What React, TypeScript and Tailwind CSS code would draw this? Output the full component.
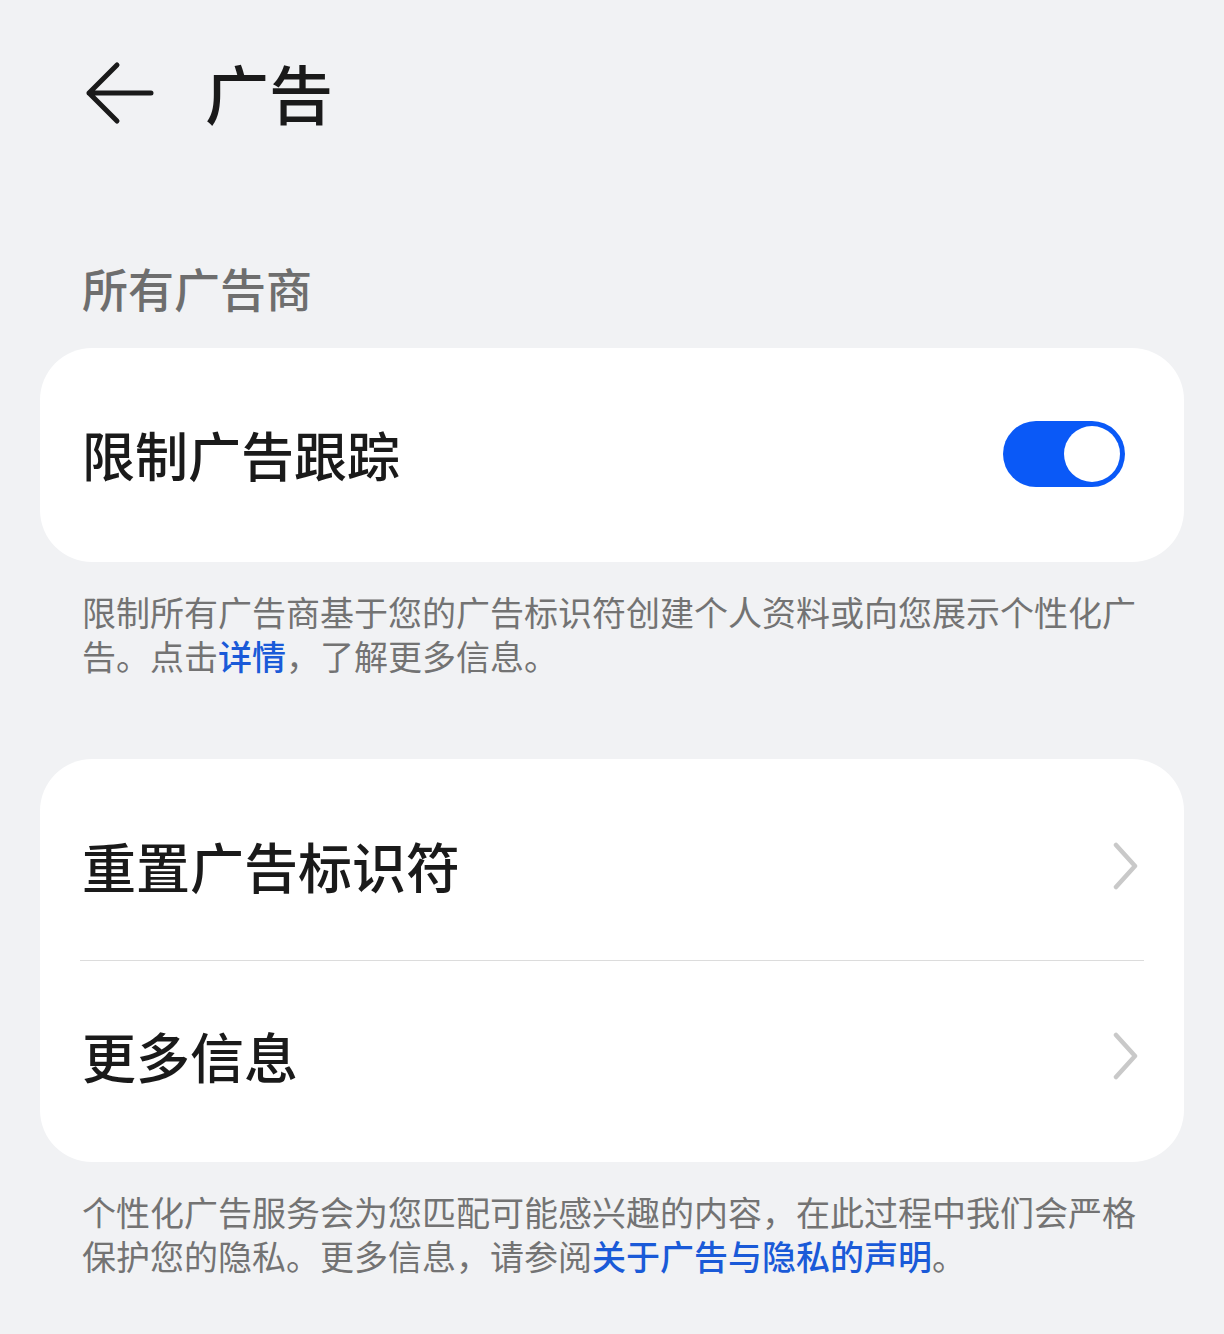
import React from "react";

const Chevron = () => (
  <svg width="26" height="48" viewBox="0 0 26 48" fill="none">
    <path d="M3 3 L22 24 L3 45" stroke="#c9c9c9" strokeWidth="4.5" strokeLinecap="round" strokeLinejoin="round" />
  </svg>
);

export default function App() {
  return (
    <div
      className="w-[1224px] min-h-[1334px] bg-[#f1f2f4] px-[40px]"
      style={{ fontFamily: '"Noto Sans CJK SC", "Noto Sans", sans-serif' }}
    >
      {/* Header */}
      <div className="h-[190px] pb-[8px] flex items-center">
        <div className="w-[165px] pl-[45px] pt-[4px] flex items-center">
          <svg width="70" height="64" viewBox="0 0 70 64" fill="none">
            <path d="M32 4 L4 32 L32 60 M4 32 L66 32" stroke="#1a1a1a" strokeWidth="5" strokeLinecap="round" strokeLinejoin="round" />
          </svg>
        </div>
        <div className="text-[64px] leading-none font-medium text-[#1a1a1a]">广告</div>
      </div>

      {/* Section header */}
      <div className="pt-[67px] pb-[31px] px-[42px] text-[46px] leading-[60px] text-[#6e6e6e] font-medium">
        所有广告商
      </div>

      {/* Card 1 */}
      <div className="h-[214px] pb-[2px] bg-white rounded-[52px] flex items-center justify-between pl-[42px] pr-[59px]">
        <div className="text-[53px] leading-none font-medium text-[#1a1a1a]">限制广告跟踪</div>
        <div className="w-[122px] h-[66px] rounded-full bg-[#0a59f7] flex items-center justify-end pr-[5px]">
          <div className="w-[56px] h-[56px] rounded-full bg-white" />
        </div>
      </div>

      {/* Description */}
      <div className="pt-[28px] px-[42px] text-[34px] leading-[44px] text-[#737373]">
        限制所有广告商基于您的广告标识符创建个人资料或向您展示个性化广告。点击
        <span className="text-[#1a5ad8] font-medium">详情</span>，了解更多信息。
      </div>

      {/* Card 2 */}
      <div className="mt-[81px] bg-white rounded-[52px] flex flex-col">
        <div className="h-[201px] pt-[12px] flex items-center justify-between pl-[42px] pr-[45px]">
          <div className="text-[54px] leading-none font-medium text-[#1a1a1a]">重置广告标识符</div>
          <Chevron />
        </div>
        <div className="mx-[40px] h-px bg-[#dcdcdc]" />
        <div className="h-[201px] pb-[12px] flex items-center justify-between pl-[42px] pr-[45px]">
          <div className="text-[54px] leading-none font-medium text-[#1a1a1a]">更多信息</div>
          <Chevron />
        </div>
      </div>

      {/* Footer */}
      <div className="pt-[28px] px-[42px] text-[34px] leading-[44px] text-[#737373]">
        个性化广告服务会为您匹配可能感兴趣的内容，在此过程中我们会严格保护您的隐私。更多信息，请参阅
        <span className="text-[#1a5ad8] font-medium">关于广告与隐私的声明</span>。
      </div>
    </div>
  );
}
